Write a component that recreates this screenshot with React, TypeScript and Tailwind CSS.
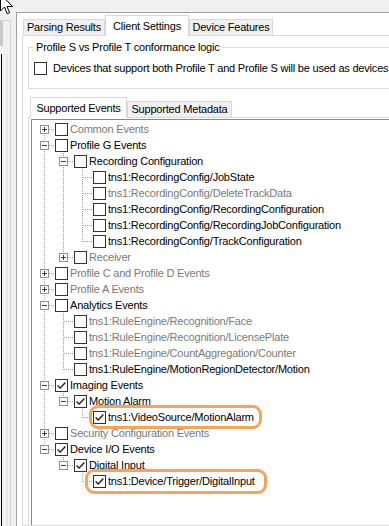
import React from "react";

type Node = {
  label: string;
  dis?: boolean;
  checked?: boolean;
  collapsed?: boolean;
  kids?: Node[];
};

type Row = Node & { level: number; anc: boolean[]; last: boolean; first: boolean };

const TREE: Node[] = [
  { label: "Common Events", dis: true, collapsed: true },
  {
    label: "Profile G Events",
    kids: [
      {
        label: "Recording Configuration",
        kids: [
          { label: "tns1:RecordingConfig/JobState" },
          { label: "tns1:RecordingConfig/DeleteTrackData", dis: true },
          { label: "tns1:RecordingConfig/RecordingConfiguration" },
          { label: "tns1:RecordingConfig/RecordingJobConfiguration" },
          { label: "tns1:RecordingConfig/TrackConfiguration" },
        ],
      },
      { label: "Receiver", dis: true, collapsed: true },
    ],
  },
  { label: "Profile C and Profile D Events", dis: true, collapsed: true },
  { label: "Profile A Events", dis: true, collapsed: true },
  {
    label: "Analytics Events",
    kids: [
      { label: "tns1:RuleEngine/Recognition/Face", dis: true },
      { label: "tns1:RuleEngine/Recognition/LicensePlate", dis: true },
      { label: "tns1:RuleEngine/CountAggregation/Counter", dis: true },
      { label: "tns1:RuleEngine/MotionRegionDetector/Motion" },
    ],
  },
  {
    label: "Imaging Events",
    checked: true,
    kids: [
      {
        label: "Motion Alarm",
        checked: true,
        kids: [{ label: "tns1:VideoSource/MotionAlarm", checked: true }],
      },
    ],
  },
  { label: "Security Configuration Events", dis: true, collapsed: true },
  {
    label: "Device I/O Events",
    checked: true,
    kids: [
      {
        label: "Digital Input",
        checked: true,
        kids: [{ label: "tns1:Device/Trigger/DigitalInput", checked: true }],
      },
    ],
  },
];

function flatten(nodes: Node[], level: number, anc: boolean[], out: Row[]) {
  nodes.forEach((n, i) => {
    const last = i === nodes.length - 1;
    out.push({ ...n, level, anc, last, first: level === 0 && i === 0 });
    if (n.kids && !n.collapsed) flatten(n.kids, level + 1, [...anc, !last], out);
  });
  return out;
}

const DOT = { stroke: "#a0a0a0", strokeDasharray: "1 1" };

function Guide({ cont }: { cont: boolean }) {
  return (
    <svg width="19" height="16" className="block shrink-0" shapeRendering="crispEdges">
      {cont && <line x1="9.5" y1="0" x2="9.5" y2="16" {...DOT} />}
    </svg>
  );
}

function Elbow({ row }: { row: Row }) {
  const box = row.collapsed ? "plus" : row.kids ? "minus" : null;
  return (
    <svg width="19" height="16" className="block shrink-0" shapeRendering="crispEdges">
      <line x1="9.5" y1={row.first ? 8 : 0} x2="9.5" y2={row.last ? 9 : 16} {...DOT} />
      <line x1="10" y1="8.5" x2="19" y2="8.5" {...DOT} />
      {box && (
        <>
          <rect x="5.5" y="4.5" width="8" height="8" fill="#fdfdfd" stroke="#919191" />
          <line x1="7" y1="8.5" x2="12" y2="8.5" stroke="#2b3f6b" />
          {box === "plus" && <line x1="9.5" y1="6" x2="9.5" y2="11" stroke="#2b3f6b" />}
        </>
      )}
    </svg>
  );
}

function Check({ checked }: { checked?: boolean }) {
  return (
    <span className="flex h-[13px] w-[13px] shrink-0 items-center justify-center border border-[#333333] bg-white">
      {checked && (
        <svg width="11" height="11" viewBox="0 0 11 11">
          <path d="M1.6 5.4 L4.2 8 L9.4 2.4" fill="none" stroke="#222" strokeWidth="1.4" />
        </svg>
      )}
    </span>
  );
}

function Tab({ label, selected, w }: { label: string; selected?: boolean; w: string }) {
  return selected ? (
    <div className={`${w} relative z-10 -mb-px flex h-[21px] items-center justify-center border border-b-0 border-[#d9d9d9] bg-white`}>
      {label}
    </div>
  ) : (
    <div className={`${w} flex h-[16px] items-center justify-center border border-b-0 border-[#d9d9d9] bg-[#f0f0f0]`}>
      {label}
    </div>
  );
}

export default function App() {
  const rows = flatten(TREE, 0, [], []);

  return (
    <div className="relative flex h-[526px] w-[389px] overflow-hidden bg-[#f0f0f0] font-['Liberation_Sans',Arial,sans-serif] text-[11px] tracking-[-0.2px] text-black">
      {/* edge of the left panel */}
      <div className="flex w-[16px] shrink-0 flex-col pt-[20px]">
        <div className="flex w-[11px] flex-1 flex-col border-r border-t border-[#d4d4d4]">
          <div className="h-[25px] w-[3px] bg-[#c9c9c9]" />
          <div className="ml-[1px] mt-[8px] w-[7px] flex-1 border-l border-r border-l-black border-r-[#e3e3e3]" />
        </div>
      </div>

      {/* main window */}
      <div className="mt-[12px] flex w-[440px] shrink-0 flex-col border-l border-t border-[#a0a0a0] bg-white pl-[5px] pt-[2px]">
        <div className="flex h-[20px] items-end pl-[1px]">
          <Tab label="Parsing Results" w="w-[82px]" />
          <Tab label="Client Settings" w="w-[84px]" selected />
          <Tab label="Device Features" w="w-[84px]" />
        </div>

        <div className="flex flex-1 flex-col border border-[#d9d9d9] bg-white">
          <fieldset className="ml-[5px] mt-[5px] w-[420px] border border-[#dcdcdc] px-[5px] pb-[13px]">
            <legend className="px-[2px] leading-[13px]">Profile S vs Profile T conformance logic</legend>
            <div className="mt-[8px] flex items-center">
              <Check />
              <span className="ml-[6px] whitespace-nowrap leading-[13px]">
                Devices that support both Profile T and Profile S will be used as devices
              </span>
            </div>
          </fieldset>

          <div className="ml-[5px] mt-[8px] flex flex-1 flex-col">
            <div className="flex h-[20px] items-end pl-[2px]">
              <Tab label="Supported Events" w="w-[97px]" selected />
              <Tab label="Supported Metadata" w="w-[105px]" />
            </div>
            <div className="flex flex-1 flex-col border-l border-t border-[#d9d9d9] pl-[2px] pt-[1px]">
              <div className="flex-1 border-l border-t border-[#828790] bg-white pl-[3px] pt-[1px]">
                {rows.map((r, i) => (
                  <div key={i} className="flex h-[16px] items-start">
                    {r.anc.map((c, j) => (
                      <Guide key={j} cont={c} />
                    ))}
                    <Elbow row={r} />
                    <span className="ml-[1px] mt-[2px]">
                      <Check checked={r.checked} />
                    </span>
                    <span className={`ml-[2px] whitespace-nowrap leading-[16px] ${r.dis ? "text-[#7a7a7a]" : "text-black"}`}>
                      {r.label}
                    </span>
                  </div>
                ))}
              </div>
            </div>
          </div>
        </div>
      </div>

      {/* highlight marks */}
      <div className="absolute left-[89px] top-[405px] h-[24px] w-[173px] rounded-[9px] border-[3px] border-[#f6a45c]" />
      <div className="absolute left-[85px] top-[469px] h-[25px] w-[182px] rounded-[9px] border-[3px] border-[#f6a45c]" />

      {/* mouse pointer */}
      <svg className="absolute left-0 top-0" width="15" height="17" viewBox="0 0 15 17">
        <path d="M0.5 -6 L0.5 11 L4.5 7 L7.2 13.8 L9.6 12.8 L7 6.5 L12.5 6.5 Z" fill="white" stroke="black" strokeWidth="1" />
      </svg>
    </div>
  );
}
